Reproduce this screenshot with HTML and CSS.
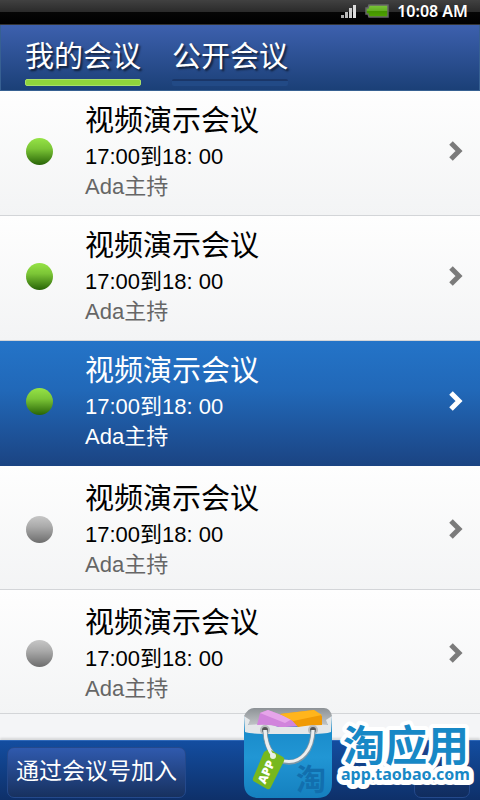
FILE: index.html
```html
<!DOCTYPE html>
<html lang="zh-CN">

<head>
  <meta charset="UTF-8">
  <meta name="viewport" content="width=device-width, initial-scale=1.0">
  <title>我的会议</title>
  <link rel="stylesheet" href="styles.css">
</head>

<body>
  <div class="status-bar">
    <svg class="signal" width="18" height="14" viewBox="0 0 18 14">
      <rect x="1" y="11" width="3" height="3" fill="#aaa" />
      <rect x="5" y="8" width="3" height="6" fill="#bbb" />
      <rect x="9" y="4" width="3" height="10" fill="#ccc" />
      <rect x="13" y="1" width="3" height="13" fill="#ddd" />
    </svg>
    <svg class="battery" width="26" height="14" viewBox="0 0 26 14">
      <defs>
        <linearGradient id="charge" x1="0" y1="0" x2="0" y2="1">
          <stop offset="0" stop-color="#7cc63a" />
          <stop offset="0.5" stop-color="#62ae22" />
          <stop offset="0.5" stop-color="#439200" />
          <stop offset="1" stop-color="#4fa400" />
        </linearGradient>
      </defs>
      <path d="M5 1h19v12H5l-1-3H2V4h2z" fill="url(#charge)" stroke="#666" stroke-width="1.5" />
    </svg>
    <span class="clock">10:08 AM</span>
  </div>

  <nav class="tabs">
    <a href="#mine" class="tab active">我的会议</a>
    <a href="#public" class="tab">公开会议</a>
  </nav>

  <main class="meetings">
    <a href="#meeting1" class="meeting">
      <span class="dot"></span>
      <div class="info">
        <div class="title">视频演示会议</div>
        <div class="time">17:00到18: 00</div>
        <div class="host">Ada主持</div>
      </div>
      <svg class="arrow" width="16" height="22" viewBox="0 0 16 22"><path d="M3 3l8 8-8 8" /></svg>
    </a>
    <a href="#meeting2" class="meeting">
      <span class="dot"></span>
      <div class="info">
        <div class="title">视频演示会议</div>
        <div class="time">17:00到18: 00</div>
        <div class="host">Ada主持</div>
      </div>
      <svg class="arrow" width="16" height="22" viewBox="0 0 16 22"><path d="M3 3l8 8-8 8" /></svg>
    </a>
    <a href="#meeting3" class="meeting selected">
      <span class="dot"></span>
      <div class="info">
        <div class="title">视频演示会议</div>
        <div class="time">17:00到18: 00</div>
        <div class="host">Ada主持</div>
      </div>
      <svg class="arrow" width="16" height="22" viewBox="0 0 16 22"><path d="M3 3l8 8-8 8" /></svg>
    </a>
    <a href="#meeting4" class="meeting offline">
      <span class="dot"></span>
      <div class="info">
        <div class="title">视频演示会议</div>
        <div class="time">17:00到18: 00</div>
        <div class="host">Ada主持</div>
      </div>
      <svg class="arrow" width="16" height="22" viewBox="0 0 16 22"><path d="M3 3l8 8-8 8" /></svg>
    </a>
    <a href="#meeting5" class="meeting offline">
      <span class="dot"></span>
      <div class="info">
        <div class="title">视频演示会议</div>
        <div class="time">17:00到18: 00</div>
        <div class="host">Ada主持</div>
      </div>
      <svg class="arrow" width="16" height="22" viewBox="0 0 16 22"><path d="M3 3l8 8-8 8" /></svg>
    </a>
  </main>

  <footer class="toolbar">
    <button type="button">通过会议号加入</button>
    <button type="button" class="more" aria-label="更多"></button>
  </footer>

  <!-- store badge over the bottom right corner -->
  <div class="badge">
    <svg class="bag" width="92" height="92" viewBox="0 0 92 92">
      <defs>
        <linearGradient id="bagBody" x1="0" y1="0" x2="0" y2="1">
          <stop offset="0" stop-color="#1686c6" />
          <stop offset="0.5" stop-color="#2196d4" />
          <stop offset="1" stop-color="#1580bf" />
        </linearGradient>
        <linearGradient id="bagRim" x1="0" y1="0" x2="0" y2="1">
          <stop offset="0" stop-color="#8d9296" />
          <stop offset="1" stop-color="#d5d8da" />
        </linearGradient>
      </defs>
      <path d="M10 0h70q6 0 8 8v16H0V8q4-8 10-8z" fill="url(#bagRim)" />
      <path d="M0 8l5 10h78l5-10v67q0 15-15 15H15Q0 90 0 75z" fill="url(#bagBody)" />
      <path d="M0 8l6 4-2 5q20-2 31 2h18q11-4 31-2l-2-5 6-4-1 16q-5 2-24 2H26Q6 26 1 24z" fill="#e4e7e9" />
      <path d="M13 17l3-12 8-3 24 9 8 7q-8 1-21 1-9-3-22-2z" fill="#d184dc" />
      <path d="M16 5l8-3 24 9-7 4z" fill="#e6a5ea" />
      <path d="M36 6l34-4 8 6v9q-14 0-24 2l-8-9z" fill="#f09a05" />
      <path d="M36 6l34-4 8 5-29 6z" fill="#ffb51c" />
      <circle cx="21" cy="22" r="4" fill="#555" stroke="#b9bcbf" stroke-width="2" />
      <circle cx="69" cy="22" r="4" fill="#555" stroke="#b9bcbf" stroke-width="2" />
      <path d="M21 22c1 43 47 43 48 0" fill="none" stroke="#7d96a5" stroke-width="5" />
      <path d="M21 22c1 42 47 42 48 0" fill="none" stroke="#eceeef" stroke-width="3" />
      <path d="M25 41l14 8q2 1 1 4L27 79q-1 3-4 2L11 74q-3-1-2-4l11-26z" fill="#77b81e" />
      <circle cx="29" cy="48" r="3" fill="#e8f2dc" />
      <path d="M21 22q1 18 8 26" fill="none" stroke="#eceeef" stroke-width="3" />
      <text x="22" y="64" class="tag-text" transform="rotate(-66 22 64)">APP</text>
      <text x="52" y="82" class="bag-text">淘</text>
    </svg>
    <svg class="wordmark" width="144" height="92" viewBox="0 0 144 92">
      <text x="5" y="72" class="site">app.taobao.com</text>
      <text x="7" y="53" class="brand">淘应用</text>
    </svg>
  </div>
</body>

</html>
```

FILE: styles.css
```css
* {
  box-sizing: border-box;
}

body {
  font-family: "Liberation Sans", "Noto Sans CJK SC", sans-serif;
  background-color: #f4f5f7;
  margin: 0;
  min-height: 100vh;
  display: flex;
  flex-direction: column;
  position: relative;
}

a {
  text-decoration: none;
  color: inherit;
}

.status-bar {
  display: flex;
  justify-content: flex-end;
  align-items: center;
  height: 25px;
  padding: 0 12px 3px;
  background: linear-gradient(#414141, #2b2b2b 48%, #060606 48%, #000);
  border-bottom: 1px solid #333;
}

.battery {
  margin: 0 7px 0 6px;
}

.clock {
  font-family: "Noto Sans", sans-serif;
  font-size: 16px;
  font-weight: 600;
  line-height: 20px;
  color: #fff;
}

.tabs {
  display: flex;
  gap: 31px;
  padding: 10px 24px 4px;
  background: linear-gradient(#3d60ae, #1b4077);
  border: 1px solid #376092;
  border-top: none;
}

.tab {
  font-size: 29px;
  line-height: 44px;
  color: #fff;
  text-shadow: 2px 2px 2px rgba(0, 0, 0, 0.6);
}

.tab::after {
  content: "";
  display: block;
  height: 5px;
  border-radius: 2px;
  background-color: #224a86;
  border-top: 2px solid #1a3668;
}

.tab.active::after {
  background-color: #8fd43c;
  border: 1px solid #a9df68;
}

.meetings {
  flex: 1;
}

.meeting {
  display: flex;
  align-items: center;
  padding: 9px 16px 13px 26px;
  background: linear-gradient(#fefefe, #f3f4f5);
  border-bottom: 1px solid #d3d5d8;
  color: #000;
}

.dot {
  width: 27px;
  height: 27px;
  margin-right: 32px;
  border-radius: 50%;
  background: linear-gradient(#96e346, #7bc536 40%, #286407);
}

.info {
  flex: 1;
}

.title {
  font-size: 29px;
  line-height: 42px;
}

.time,
.host {
  font-size: 22px;
  line-height: 30px;
}

.host {
  color: #666;
}

.arrow path {
  fill: none;
  stroke: #7b7b7b;
  stroke-width: 5;
}

.meeting.selected {
  background: linear-gradient(#2474c8, #2168b8 40%, #1b4483);
  border-bottom-color: #1b4483;
  color: #fff;
}

.selected .host {
  color: #fff;
}

.selected .arrow path {
  stroke: #fff;
}

.meeting.offline {
  padding-top: 12px;
  padding-bottom: 9px;
}

.offline .dot {
  background: linear-gradient(#c6c6c6, #aaa 40%, #6d6d6d);
}

.toolbar {
  display: flex;
  justify-content: space-between;
  padding: 6px 10px 2px 7px;
  background: linear-gradient(#134da0, #0e3069);
  border-top: 1px solid #2f68b8;
  box-shadow: 0 -2px 2px rgba(0, 0, 0, 0.12);
}

.toolbar button {
  height: 51px;
  padding: 0 8px 8px;
  font-family: inherit;
  font-size: 23px;
  color: #fff;
  background: linear-gradient(#305aae, #17315f);
  border: 1px solid #24498c;
  border-radius: 7px;
}

.toolbar .more {
  width: 56px;
  background: linear-gradient(#1c4590, #102c5e);
}

.badge {
  position: absolute;
  right: 0;
  bottom: 0;
  display: flex;
}

.tag-text {
  font-family: "Open Sans", sans-serif;
  font-size: 12px;
  font-weight: 800;
  fill: #fff;
  text-anchor: middle;
  dominant-baseline: central;
}

.bag-text {
  font-family: "Noto Sans CJK SC", sans-serif;
  font-size: 30px;
  font-weight: 700;
  fill: #126fae;
}

.brand,
.site {
  font-weight: 700;
  fill: #1788c6;
  stroke: #fff;
  stroke-width: 10px;
  stroke-linejoin: round;
  paint-order: stroke;
}

/* narrower outline, so that it stops above the site name */
.brand {
  font-family: "Noto Sans CJK SC", sans-serif;
  font-size: 42px;
  stroke-width: 8px;
}

.site {
  font-family: "Noto Sans", sans-serif;
  font-size: 16px;
}
```
